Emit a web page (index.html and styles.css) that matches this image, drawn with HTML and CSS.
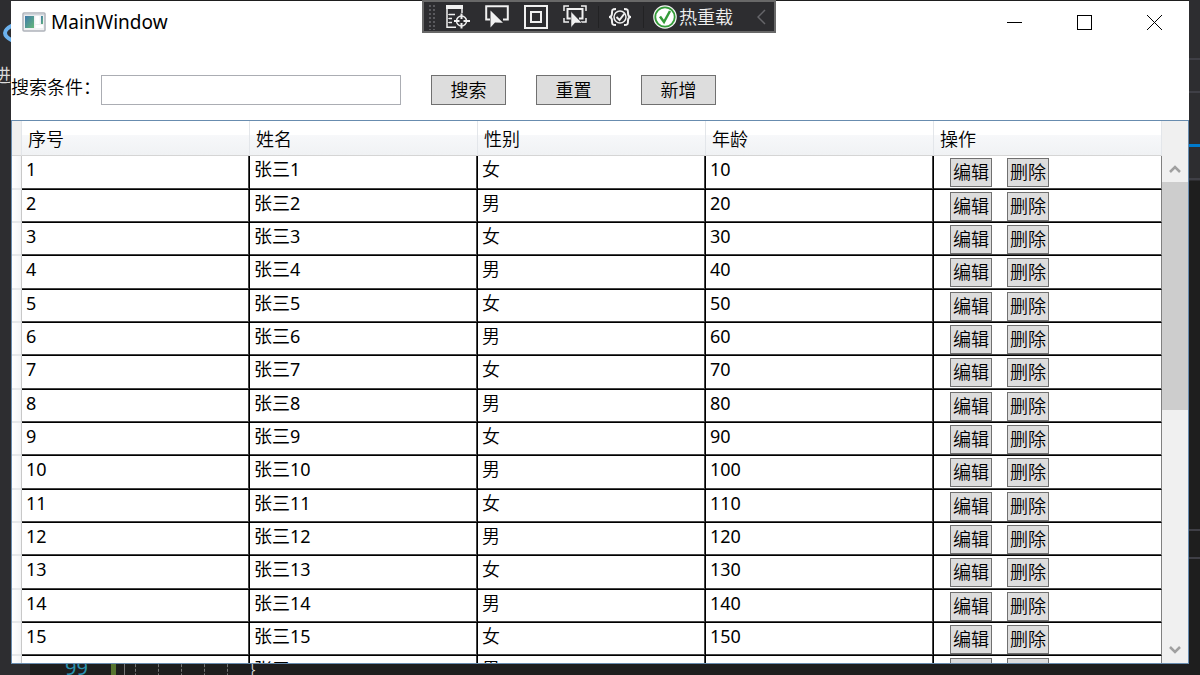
FILE: index.html
```html
<!DOCTYPE html>
<html lang="zh-CN">
<head>
    <meta charset="UTF-8">
    <meta name="viewport" content="width=device-width, initial-scale=1.0">
    <title>MainWindow</title>
    <link rel="stylesheet" href="styles.css">
</head>
<body>
    <!-- editor behind the window -->
    <div class="editor">
        <div class="editor-left">
            <svg class="back-icon" width="18" height="20" viewBox="0 0 18 20"><path d="M13 2Q-3 10 13 18" fill="none" stroke="#6cb2ee" stroke-width="4"/></svg>
            <span class="process">进</span>
        </div>
        <div class="editor-right">
            <i class="rule r1"></i><i class="rule r2"></i><i class="rule blue"></i><i class="rule r3"></i><i class="rule r4"></i><i class="rule r5"></i>
        </div>
        <div class="editor-line">
            <span class="line-no">99</span>
            <span class="changed"></span>
            <span class="guides"><i></i><i></i><i></i><i></i><i></i><i></i></span>
            <span class="brace">}</span>
        </div>
    </div>

    <div class="window">
        <header class="titlebar">
            <svg class="app-icon" width="24" height="20" viewBox="0 0 24 20">
                <defs>
                    <linearGradient id="pane" x1="0" y1="0" x2="1" y2="1">
                        <stop offset="0" stop-color="#3f79ac"/><stop offset="1" stop-color="#65b878"/>
                    </linearGradient>
                </defs>
                <rect x="1" y="1" width="22" height="18" rx="1" fill="#f0f1f2" stroke="#aeb3ba" stroke-width="1.5"/>
                <path d="M2 2.500H22" stroke="#d0d4da" stroke-width="1.500"/>
                <rect x="3" y="4" width="9" height="12" fill="url(#pane)"/>
                <rect x="13.500" y="4" width="4" height="8" fill="#fff"/>
                <rect x="19" y="4" width="2" height="8" fill="url(#pane)"/>
                <rect x="13.500" y="13" width="7.500" height="3" fill="#fff"/>
            </svg>
            <h1>MainWindow</h1>
            <div class="caption-buttons">
                <button type="button" aria-label="最小化"><svg width="15" height="15"><path d="M0 7.500H15" stroke="#000"/></svg></button>
                <button type="button" aria-label="最大化"><svg width="15" height="15"><rect x=".5" y=".5" width="14" height="14" fill="none" stroke="#000"/></svg></button>
                <button type="button" aria-label="关闭"><svg width="15" height="15"><path d="M0 0l15 15M15 0L0 15" stroke="#000"/></svg></button>
            </div>
        </header>

        <form class="search" onsubmit="return false">
            <label for="keyword">搜索条件：</label>
            <input type="text" id="keyword">
            <button type="button">搜索</button>
            <button type="button">重置</button>
            <button type="button">新增</button>
        </form>

        <div class="datagrid">
            <div class="viewport">
                <table id="people">
                    <thead>
                        <tr>
                            <th class="row-head"></th>
                            <th>序号</th>
                            <th>姓名</th>
                            <th>性别</th>
                            <th>年龄</th>
                            <th>操作</th>
                        </tr>
                    </thead>
                    <tbody></tbody>
                </table>
            </div>
            <div class="scrollbar">
                <button type="button" aria-label="向上滚动"><svg width="12" height="8"><path d="M1 7l5-5 5 5" fill="none" stroke="#a0a0a0" stroke-width="2.500"/></svg></button>
                <div class="track"><div class="thumb"></div></div>
                <button type="button" aria-label="向下滚动"><svg width="12" height="8"><path d="M1 1l5 5 5-5" fill="none" stroke="#a0a0a0" stroke-width="2.500"/></svg></button>
            </div>
        </div>
    </div>

    <!-- debug toolbar -->
    <div class="debugbar">
        <span class="grip"></span>
        <div class="tools">
            <button type="button" aria-label="实时可视化树">
                <svg width="24" height="24" fill="none" stroke="#f0f0f0" stroke-width="1.500">
                    <path d="M0 2H17" stroke-width="4"/><path d="M1 4V23M16 4V8M3 9.500H9M3 13.500H6M3 17.500H6M1 22.300H10M3 9v1M3 13v1M3 17v1"/>
                    <circle cx="15.500" cy="16" r="5"/><path d="M15.500 8.500V14M15.500 18V23.500M8 16h5.500M17.500 16H24" stroke-width="2"/>
                </svg>
            </button>
            <button type="button" aria-label="选择元素">
                <svg width="24" height="24"><path d="M5 14.500H1.200V1.200H22.800V14.500H18" fill="none" stroke="#f0f0f0" stroke-width="2"/><path d="M5.500 5.500V22.500L10 17.500 18 17.800z" fill="#f0f0f0"/></svg>
            </button>
            <button type="button" aria-label="显示布局装饰器">
                <svg width="24" height="24" fill="none" stroke="#f0f0f0"><rect x="1" y="1" width="22" height="22" stroke-width="2"/><rect x="7" y="7" width="10" height="10" stroke-width="2"/></svg>
            </button>
            <button type="button" aria-label="跟踪焦点元素">
                <svg width="24" height="24"><path d="M1 6V1H6M18 1H23V6M1 13V17H6M23 13V17H18" fill="none" stroke="#f0f0f0" stroke-width="1.500"/><path d="M8 13.500H4.500V4H19.500V13.500H16" fill="none" stroke="#f0f0f0" stroke-width="2"/><path d="M8 6.500V22.500L12 18 19 18z" fill="#f0f0f0" stroke="#2d2d30" stroke-width=".5"/></svg>
            </button>
        </div>
        <span class="divider"></span>
        <button type="button" aria-label="绑定失败">
            <svg width="24" height="24" fill="none" stroke="#f0f0f0" stroke-width="2">
                <path d="M8 4C4 4 4 5 4 8S3 12 1 12C3 12 4 13 4 16S4 20 8 20M16 4C20 4 20 5 20 8S21 12 23 12C21 12 20 13 20 16S20 20 16 20"/>
                <circle cx="12" cy="12" r="6" stroke-width="1.500"/><path d="M8.500 12l3 3 5-6.500"/>
            </svg>
        </button>
        <span class="divider"></span>
        <button type="button" class="hot-reload">
            <svg width="24" height="24"><circle cx="12" cy="12" r="11.800" fill="#f4f4f4"/><circle cx="12" cy="12" r="9.700" fill="#fff" stroke="#339b38" stroke-width="1.800"/><path d="M7 11.500l4 5.500 6-11" fill="none" stroke="#339b38" stroke-width="2.500"/></svg>
            热重载
        </button>
        <button type="button" class="collapse" aria-label="折叠"><svg width="9" height="16"><path d="M8 1L1 8l7 7" fill="none" stroke="#66666a" stroke-width="1.500"/></svg></button>
    </div>

    <script>
        const tableBody = document.querySelector('#people tbody');
        let rows = '';
        for (let i = 1; i <= 30; i++) {
            rows += `<tr>
                <th class="row-head"></th>
                <td class="num">${i}</td>
                <td class="num">张三${i}</td>
                <td>${i % 2 ? '女' : '男'}</td>
                <td class="num">${i * 10}</td>
                <td class="actions"><div><button type="button">编辑</button><button type="button">删除</button></div></td>
            </tr>`;
        }
        tableBody.innerHTML = rows;
    </script>
</body>
</html>
```
FILE: styles.css
```css
* { box-sizing: border-box; }
body { margin: 0; height: 100vh; padding: 1px 11px 11px; overflow: hidden; background: #1e1e1e; font-family: "Noto Sans", "Noto Sans CJK SC", sans-serif; font-size: 18px; font-weight: 350; line-height: 26px; color: #000; }
button, input { font: inherit; color: inherit; padding: 0; margin: 0; }
svg { display: block; }

/* editor */
.editor { position: absolute; inset: 0; overflow: hidden; }
.editor-left { position: absolute; left: 0; top: 0; bottom: 0; width: 30px; background: #2d2d30; color: #ddd; }
.back-icon { position: absolute; left: 0; top: 23px; }
.process { position: absolute; left: -7px; top: 62px; }
.editor-right { position: absolute; right: 0; top: 0; width: 11px; height: 181px; background: #2d2d30; }
.rule { position: absolute; left: 0; width: 11px; height: 2px; background: #3f3f46; }
.r1 { top: 58px; }
.r2 { top: 91px; }
.blue { top: 144px; height: 3px; background: #007acc; }
.r3 { top: 178px; }
.r4 { top: 529px; }
.r5 { top: 557px; }
.editor-line { position: absolute; left: 65px; bottom: -6px; display: flex; align-items: center; color: #2b91af; }
.line-no { width: 46px; font-size: 20px; font-weight: 400; }
.changed { width: 5px; height: 26px; background: #577430; }
.guides { display: flex; gap: 22px; margin-left: 8px; width: 125px; }
.guides i { height: 26px; border-left: 1px dashed #777; }
.guides i:first-child { border-left-style: solid; margin-right: -12px; }
.brace { color: #dcdcdc; }

/* window */
.window { position: relative; display: flex; flex-direction: column; height: 100%; background: #fff; }
.titlebar { display: flex; align-items: center; height: 42px; padding-left: 11px; }
.titlebar h1 { margin: 0 0 0 5px; font-size: 19px; font-weight: 400; }
.caption-buttons { display: flex; margin-left: auto; }
.caption-buttons button { display: flex; align-items: center; justify-content: center; width: 70px; height: 43px; border: 0; background: none; }

.search { display: flex; height: 77px; padding: 32px 0 15px; }
.search label { width: 90px; line-height: 24px; white-space: nowrap; }
.search input { width: 300px; height: 30px; padding: 0 4px; border: 1px solid #abadb3; background: #fff; }
.search button { width: 75px; height: 30px; margin-left: 30px; line-height: 28px; }
.search button, .actions button { border: 1px solid #707070; background: #ddd; }

/* data grid */
.datagrid { display: flex; flex: 1; min-height: 0; border: 1px solid #688caf; background: #f0f0f0; }
.viewport { flex: 1; overflow: hidden; background: #fff; }
table { width: 100%; table-layout: fixed; border-collapse: separate; border-spacing: 0; }
th, td { padding: 0 4px; text-align: left; font-weight: inherit; vertical-align: top; }
thead th { height: 35px; padding: 5px 6px 0; background: linear-gradient(#fff 0 40%, #f7f8fa 40%, #f0f2f4 100%); border-right: 1px solid #e3e6ea; border-bottom: 1px solid #d5d5d5; }
tbody td { height: 33px; border-right: 1px solid #000; border-bottom: 1px solid #000; box-shadow: inset -1px -1px #444; }
tbody tr:nth-child(3n+1) td { height: 34px; }
tbody td:last-child { border-right-color: #808080; box-shadow: inset 0 -1px #444; }
.num { font-weight: 400; }
.row-head { width: 10px; padding: 0; }
thead .row-head { padding: 0; background: #f0f0f0; }
tbody .row-head { background: linear-gradient(90deg, #fff, #f4f5f7); border-right: 1px solid #c8c8c8; border-bottom: 2px solid #e6e8ea; }
.actions div { display: flex; gap: 15px; padding: 2px 0 0 12px; }
.actions button { width: 42px; height: 29px; line-height: 27px; white-space: nowrap; }

.scrollbar { display: flex; flex-direction: column; width: 26px; padding-top: 35px; }
.scrollbar button { display: flex; align-items: center; justify-content: center; height: 26px; border: 0; background: none; }
.track { flex: 1; }
.thumb { height: 50%; background: #cdcdcd; }

/* debug toolbar */
.debugbar { position: absolute; top: 0; left: 422px; display: flex; align-items: center; width: 354px; height: 33px; padding-left: 4px; border: 2px solid #686868; background: #2d2d30; color: #f0f0f0; }
.debugbar button { border: 0; background: none; }
.grip { width: 8px; height: 26px; margin-right: 10px; background: radial-gradient(#5a5a5e 1px, transparent 1px) 0 0 / 4px 4px; }
.tools { display: flex; gap: 15px; }
.divider { width: 1px; height: 22px; margin: 0 9px 0 11px; background: #222224; }
.debugbar .hot-reload { display: flex; align-items: center; gap: 2px; white-space: nowrap; }
.debugbar .collapse { margin-left: auto; margin-right: 8px; }
```
